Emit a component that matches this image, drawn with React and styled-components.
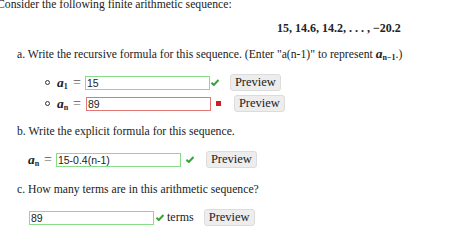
import React from "react";
import styled, { createGlobalStyle } from "styled-components";

const Global = createGlobalStyle`
  html, body { margin: 0; padding: 0; background: #fff; }
  body { font-family: "Liberation Serif", "Times New Roman", serif; color: #222; overflow: hidden; }
`;

const Page = styled.div`
  width: 474px;
  height: 251px;
  overflow: hidden;
  font-size: 11.7px;
  padding-top: 1px;
  box-sizing: border-box;
`;

const Intro = styled.p`
  margin: -3px 0 0 -3px;
  line-height: 14px;
`;

const Display = styled.div`
  padding-left: 277px;
  margin-top: 9px;
  font-weight: bold;
  font-size: 12px;
  line-height: 14px;
`;

const Part = styled.p`
  margin: ${(p) => p.$mt}px 0 0 17px;
  line-height: 14px;
  height: 14px;
`;

const Row = styled.div`
  display: flex;
  align-items: center;
  height: 17px;
  margin-top: ${(p) => p.$mt}px;
  padding-left: ${(p) => p.$pl}px;
`;

const Bullet = styled.span`
  box-sizing: border-box;
  width: 5px;
  height: 5px;
  border: 1px solid #333;
  border-radius: 50%;
  margin-right: 7px;
`;

const MathVar = styled.span`
  font-style: italic;
  font-weight: bold;
  font-size: 13.5px;
  line-height: 1;
  display: inline-block;
  width: ${(p) => p.$w || "auto"};
  sub {
    font-size: 8px;
    font-style: normal;
    vertical-align: -2px;
    line-height: 0;
  }
`;

const Eq = styled.span`
  font-size: 14px;
  line-height: 1;
  margin: 0 ${(p) => p.$mr || 4}px 0 ${(p) => p.$ml || 4}px;
  color: #555;
`;

const Input = styled.div`
  box-sizing: border-box;
  width: 125px;
  height: 14px;
  border: 1px solid ${(p) => (p.$bad ? "#e07878" : "#88dd88")};
  font-family: "Liberation Sans", Arial, sans-serif;
  font-size: 10.5px;
  line-height: 12px;
  padding-left: 1px;
  color: #222;
`;

const Mark = styled.span`
  display: inline-flex;
  align-items: center;
  justify-content: center;
  width: 8px;
  margin-left: ${(p) => p.$ml || 1}px;
`;

const Square = styled.span`
  width: 5px;
  height: 5px;
  background: #c8202a;
`;

const Button = styled.div`
  box-sizing: border-box;
  width: 51px;
  height: 17px;
  margin-left: ${(p) => p.$ml}px;
  background: #ededed;
  border: 1px solid #dcdcdc;
  border-radius: 3px;
  font-size: 12.5px;
  line-height: 15px;
  text-align: center;
  color: #222;
`;

const Unit = styled.span`
  margin-left: 3px;
  font-size: 12px;
`;

const Check = () => (
  <svg width="8" height="7" viewBox="0 0 8 7">
    <path d="M0.5 3.8 L2.8 6 L7.5 1" stroke="#3aa23a" strokeWidth="2" fill="none" />
  </svg>
);

export default function App() {
  return (
    <Page>
      <Global />
      <Intro>Consider the following finite arithmetic sequence:</Intro>
      <Display>15, 14.6, 14.2, . . . , −20.2</Display>
      <Part $mt={12}>
        a. Write the recursive formula for this sequence. (Enter "a(n-1)" to represent{" "}
        <MathVar>
          a<sub>n−1</sub>
        </MathVar>
        .)
      </Part>
      <Row $mt={13} $pl={45}>
        <Bullet />
        <MathVar $w="12px">
          a<sub>1</sub>
        </MathVar>
        <Eq>=</Eq>
        <Input>15</Input>
        <Mark>
          <Check />
        </Mark>
        <Button $ml={11}>Preview</Button>
      </Row>
      <Row $mt={4} $pl={45}>
        <Bullet />
        <MathVar $w="12px">
          a<sub>n</sub>
        </MathVar>
        <Eq $mr={5}>=</Eq>
        <Input $bad>89</Input>
        <Mark $ml={4}>
          <Square />
        </Mark>
        <Button $ml={11}>Preview</Button>
      </Row>
      <Part $mt={13}>b. Write the explicit formula for this sequence.</Part>
      <Row $mt={12} $pl={28}>
        <MathVar $w="14px">
          a<sub>n</sub>
        </MathVar>
        <Eq $ml={2} $mr={4}>=</Eq>
        <Input>15-0.4(n-1)</Input>
        <Mark $ml={5}>
          <Check />
        </Mark>
        <Button $ml={12}>Preview</Button>
      </Row>
      <Part $mt={15}>c. How many terms are in this arithmetic sequence?</Part>
      <Row $mt={12} $pl={29}>
        <Input>89</Input>
        <Mark $ml={2}>
          <Check />
        </Mark>
        <Unit>terms</Unit>
        <Button $ml={10}>Preview</Button>
      </Row>
    </Page>
  );
}
